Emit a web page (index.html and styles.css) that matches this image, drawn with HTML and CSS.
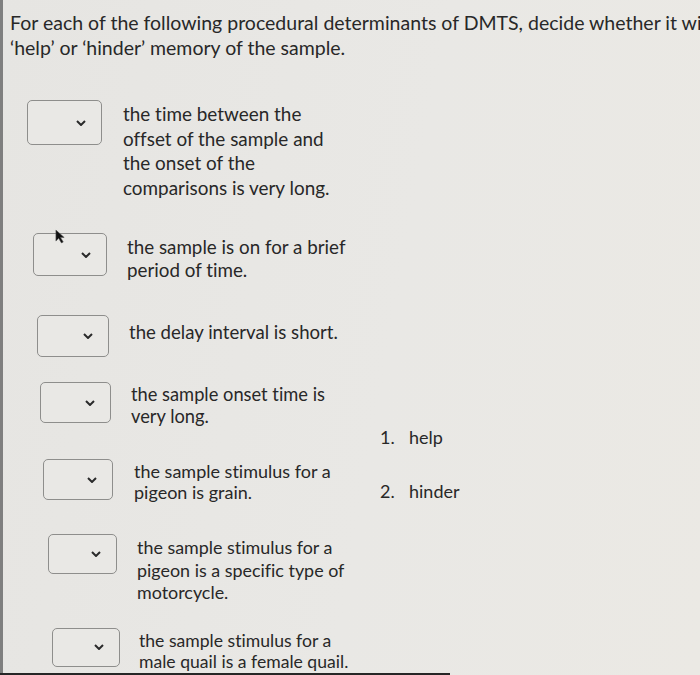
FILE: index.html
```html
<!DOCTYPE html>
<html lang="en">
<head>
  <meta charset="UTF-8">
  <meta name="viewport" content="width=device-width, initial-scale=1.0">
  <title>DMTS matching question</title>
  <link rel="stylesheet" href="styles.css">
</head>
<body>
  <div class="page">
    <p class="prompt">For each of the following procedural determinants of DMTS, decide whether it will<br>‘help’ or ‘hinder’ memory of the sample.</p>

    <div class="question">
      <ul class="statements">
        <li class="statement">
          <span class="select"><svg class="chevron" viewBox="0 0 10 6"><path d="M1 1l4 4 4-4"/></svg></span>
          <span class="statement-text">the time between the<br>offset of the sample and<br>the onset of the<br>comparisons is very long.</span>
        </li>
        <li class="statement">
          <span class="select"><svg class="chevron" viewBox="0 0 10 6"><path d="M1 1l4 4 4-4"/></svg></span>
          <span class="statement-text">the sample is on for a brief<br>period of time.</span>
        </li>
        <li class="statement">
          <span class="select"><svg class="chevron" viewBox="0 0 10 6"><path d="M1 1l4 4 4-4"/></svg></span>
          <span class="statement-text">the delay interval is short.</span>
        </li>
        <li class="statement">
          <span class="select"><svg class="chevron" viewBox="0 0 10 6"><path d="M1 1l4 4 4-4"/></svg></span>
          <span class="statement-text">the sample onset time is<br>very long.</span>
        </li>
        <li class="statement">
          <span class="select"><svg class="chevron" viewBox="0 0 10 6"><path d="M1 1l4 4 4-4"/></svg></span>
          <span class="statement-text">the sample stimulus for a<br>pigeon is grain.</span>
        </li>
        <li class="statement">
          <span class="select"><svg class="chevron" viewBox="0 0 10 6"><path d="M1 1l4 4 4-4"/></svg></span>
          <span class="statement-text">the sample stimulus for a<br>pigeon is a specific type of<br>motorcycle.</span>
        </li>
        <li class="statement">
          <span class="select"><svg class="chevron" viewBox="0 0 10 6"><path d="M1 1l4 4 4-4"/></svg></span>
          <span class="statement-text">the sample stimulus for a<br>male quail is a female quail.</span>
        </li>
      </ul>

      <ol class="options">
        <li class="option"><span class="num">1.</span>help</li>
        <li class="option"><span class="num">2.</span>hinder</li>
      </ol>
    </div>

    <!-- mouse pointer over the second dropdown -->
    <svg class="cursor" viewBox="0 0 12 16"><path d="M1 1v12l3-3 3 5 2-1-3-5h4z"/></svg>
  </div>
</body>
</html>
```

FILE: styles.css
```css
body {
  margin: 0;
  padding: 0;
  overflow: hidden;
  font-family: Lato, "Open Sans", sans-serif;
  font-variant-ligatures: none;
  color: #282828;
  background: #e8e7e4;
}
.page {
  position: relative;
  height: 675px;
  padding: 10px 0 0 7px;
  box-sizing: border-box;
  border-left: 3px solid #7f7f7f;
  background: linear-gradient(100deg, #e6e5e2 0%, #e9e8e5 55%, #ebe9e4 100%);
}
/* dark bezel edge seen at the bottom of the photo */
.page::after {
  content: "";
  position: absolute;
  left: -3px;
  bottom: 0;
  width: 450px;
  height: 2px;
  background: #262626;
}
.prompt {
  margin: 0;
  font-size: 19.5px;
  line-height: 25px;
  white-space: nowrap;
}
.question {
  display: grid;
  grid-template-columns: 370px auto;
  margin-top: 40px;
}
.statements {
  list-style: none;
  margin: 0;
  padding: 0 0 0 17px;
}
.statement {
  display: flex;
  align-items: flex-start;
  gap: var(--gap, 21px);
  margin-left: var(--shift);
  margin-bottom: var(--after);
  font-size: var(--fs);
  line-height: var(--lh);
}
.select {
  display: flex;
  align-items: center;
  justify-content: flex-end;
  flex: none;
  width: var(--bw);
  height: var(--bh);
  padding-right: 15px;
  box-sizing: border-box;
  border: 1px solid #8e8e8c;
  border-radius: 5px;
  background: #e9e8e5;
}
.chevron {
  width: 10px;
  height: 6px;
  fill: none;
  stroke: #2a2a2a;
  stroke-width: 2;
}
.statement-text {
  padding-top: var(--pt, 2px);
}
.statement:nth-child(1) { --shift: 0px;  --bw: 75px; --bh: 45px; --fs: 18.9px; --lh: 24.5px; --after: 33px; }
.statement:nth-child(2) { --shift: 6px;  --bw: 74px; --bh: 43px; --fs: 18.8px; --lh: 23px;   --after: 34px; --gap: 20px; }
.statement:nth-child(3) { --shift: 10px; --bw: 72px; --bh: 42px; --fs: 18.6px; --lh: 22px;   --after: 25px; --gap: 20px; --pt: 6px; }
.statement:nth-child(4) { --shift: 13px; --bw: 71px; --bh: 41px; --fs: 18.3px; --lh: 21.5px; --after: 32px; --gap: 20px; }
.statement:nth-child(5) { --shift: 16px; --bw: 70px; --bh: 41px; --fs: 18px;   --lh: 21px;   --after: 31px; }
.statement:nth-child(6) { --shift: 21px; --bw: 69px; --bh: 40px; --fs: 17.9px; --lh: 22.5px; --after: 24px; --gap: 20px; }
.statement:nth-child(7) { --shift: 25px; --bw: 68px; --bh: 39px; --fs: 17.6px; --lh: 21px;   --after: 0;    --gap: 19px; }
.options {
  list-style: none;
  margin: 0;
  padding: 325px 0 0 0;
  font-size: 18px;
  line-height: 24px;
}
.option {
  display: flex;
  margin-bottom: 30px;
}
.num {
  width: 29px;
  flex: none;
}
.cursor {
  position: absolute;
  left: 52px;
  top: 229px;
  width: 11px;
  height: 15px;
  fill: #111;
  stroke: #555;
  stroke-width: 0.6;
}
```
